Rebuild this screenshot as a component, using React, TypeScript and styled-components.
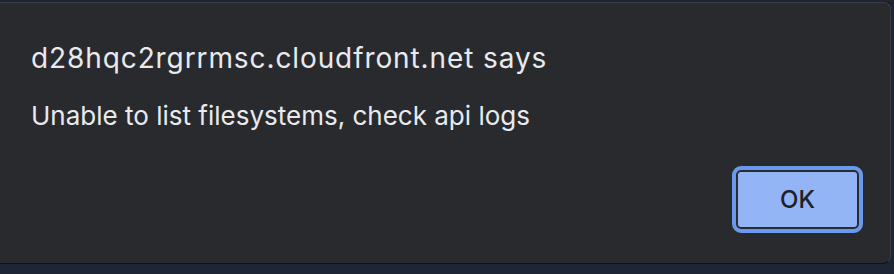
import styled, { createGlobalStyle } from "styled-components";

const GlobalStyle = createGlobalStyle`
  html, body {
    margin: 0;
    padding: 0;
    background: #1e2636;
    overflow: hidden;
  }
  body {
    font-family: Inter, "Liberation Sans", sans-serif;
  }
`;

const Page = styled.div`
  width: 894px;
  height: 274px;
  background: linear-gradient(#202124 0 2px, #1e2636 2px);
`;

const Dialog = styled.div`
  box-sizing: border-box;
  width: 891px;
  height: 262px;
  margin-top: 2px;
  background: #292a2d;
  border-top: 1px solid #3a3b3f;
  border-right: 1px solid #3a3b3f;
  border-bottom: 1px solid #111215;
  border-radius: 0 8px 8px 0;
  padding: 38px 27px 0 31px;
  display: flex;
  flex-direction: column;
`;

const Title = styled.h1`
  margin: 0;
  font-size: 28px;
  line-height: 34px;
  font-weight: 400;
  letter-spacing: 0.9px;
  color: #e8eaed;
`;

const Message = styled.p`
  margin: 25px 0 0;
  font-size: 26px;
  line-height: 32px;
  color: #e8eaed;
`;

const Actions = styled.div`
  display: flex;
  justify-content: flex-end;
  margin-top: 34px;
`;

const Button = styled.button`
  box-sizing: border-box;
  width: 131px;
  height: 67px;
  border: 4px solid #6a98ec;
  border-radius: 9px;
  background: #93b4f5;
  outline: none;
  padding: 0;
  font-family: Inter, "Liberation Sans", sans-serif;
  font-size: 24px;
  font-weight: 500;
  color: #202124;
  cursor: pointer;
  position: relative;

  &::after {
    content: "";
    position: absolute;
    inset: 0;
    border: 2px solid #2a2b2f;
    border-radius: 5px;
    pointer-events: none;
  }
`;

const App = () => {
  return (
    <Page>
      <GlobalStyle />
      <Dialog>
        <Title>d28hqc2rgrrmsc.cloudfront.net says</Title>
        <Message>Unable to list filesystems, check api logs</Message>
        <Actions>
          <Button>OK</Button>
        </Actions>
      </Dialog>
    </Page>
  );
};

export default App;
